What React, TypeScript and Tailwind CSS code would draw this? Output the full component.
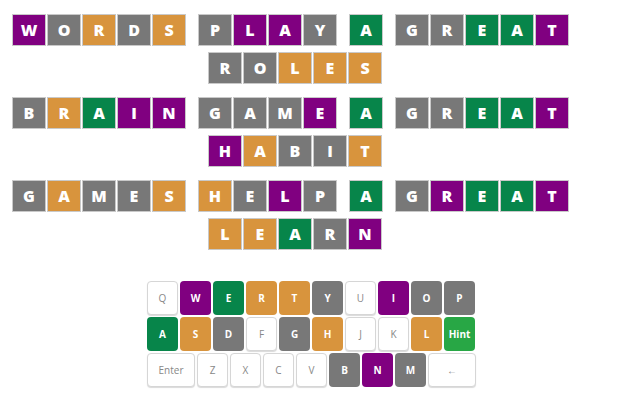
import React from "react";

type C = "p" | "g" | "o" | "e" | "w" | "h";

const tileBg: Record<string, string> = {
  p: "bg-[#800080]",
  g: "bg-[#787878]",
  o: "bg-[#d8943d]",
  e: "bg-[#07854a]",
};

const lines: { words: [string, string][]; indent?: boolean }[][] = [
  [
    { words: [["WORDS", "pgogo"], ["PLAY", "gppg"], ["A", "e"], ["GREAT", "ggeep"]] },
    { words: [["ROLES", "ggooo"]], indent: true },
  ],
  [
    { words: [["BRAIN", "goepp"], ["GAME", "gggp"], ["A", "e"], ["GREAT", "ggeep"]] },
    { words: [["HABIT", "poggo"]], indent: true },
  ],
  [
    { words: [["GAMES", "goggo"], ["HELP", "ogpg"], ["A", "e"], ["GREAT", "gpeep"]] },
    { words: [["LEARN", "ooegp"]], indent: true },
  ],
];

function Tile({ ch, c }: { ch: string; c: string }) {
  return (
    <div
      className={`w-[34px] h-[32px] flex items-center justify-center border border-[#c9c9c9] text-white font-extrabold text-[16px] ${tileBg[c]}`}
    >
      {ch}
    </div>
  );
}

function Word({ w, c }: { w: string; c: string }) {
  return (
    <div className="flex gap-[1px]">
      {w.split("").map((ch, i) => (
        <Tile key={i} ch={ch} c={c[i]} />
      ))}
    </div>
  );
}

const keyBg: Record<string, string> = {
  p: "bg-[#800080] text-white font-bold",
  g: "bg-[#787878] text-white font-bold",
  o: "bg-[#d8943d] text-white font-bold",
  e: "bg-[#07854a] text-white font-bold",
  h: "bg-[#28a745] text-white font-bold",
  w: "bg-white text-[#888] border border-[#d6d6d6] shadow-[0_1px_1px_rgba(0,0,0,0.15)]",
};

function Key({ label, c, wide }: { label: string; c: C; wide?: boolean }) {
  return (
    <div
      className={`${wide ? "w-[48px]" : "w-[31px]"} h-[34px] rounded-[4px] flex items-center justify-center text-[10px] ${keyBg[c]}`}
    >
      {label}
    </div>
  );
}

const kb: [string, C, boolean?][][] = [
  [["Q", "w"], ["W", "p"], ["E", "e"], ["R", "o"], ["T", "o"], ["Y", "g"], ["U", "w"], ["I", "p"], ["O", "g"], ["P", "g"]],
  [["A", "e"], ["S", "o"], ["D", "g"], ["F", "w"], ["G", "g"], ["H", "o"], ["J", "w"], ["K", "w"], ["L", "o"], ["Hint", "h"]],
  [["Enter", "w", true], ["Z", "w"], ["X", "w"], ["C", "w"], ["V", "w"], ["B", "g"], ["N", "p"], ["M", "g"], ["←", "w", true]],
];

export default function App() {
  return (
    <div
      className="w-[620px] h-[402px] bg-white overflow-hidden"
      style={{ fontFamily: '"Open Sans", "Noto Sans", sans-serif' }}
    >
      <div className="pt-[14px] pl-[12px] flex flex-col gap-[13px]">
        {lines.map((group, gi) => (
          <div key={gi} className="flex flex-col gap-[6px]">
            {group.map((line, li) => (
              <div key={li} className={`flex gap-[12px] ${line.indent ? "pl-[196px]" : ""}`}>
                {line.words.map(([w, c], wi) => (
                  <Word key={wi} w={w} c={c} />
                ))}
              </div>
            ))}
          </div>
        ))}
      </div>
      <div className="mt-[31px] pl-[147px] flex flex-col gap-[2px]">
        {kb.map((row, ri) => (
          <div key={ri} className="flex gap-[2px]">
            {row.map(([l, c, wide], ki) => (
              <Key key={ki} label={l} c={c} wide={wide} />
            ))}
          </div>
        ))}
      </div>
    </div>
  );
}
